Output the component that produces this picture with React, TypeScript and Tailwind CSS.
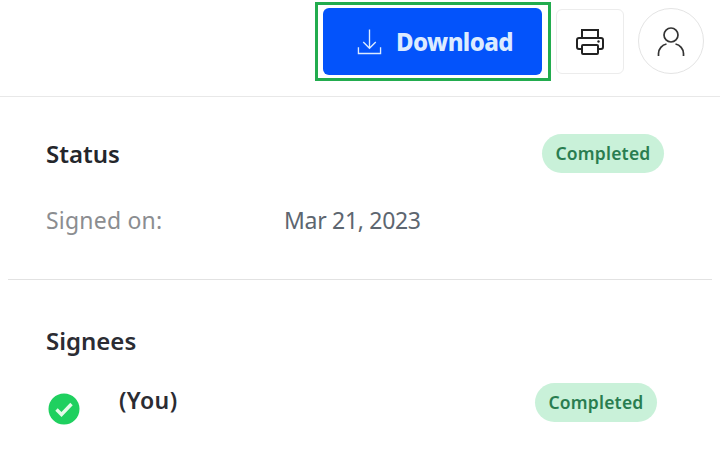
function Pill() {
  return (
    <span className="flex h-[39px] w-[122px] items-center justify-center rounded-full bg-[#c9f1d9] text-[17.5px] font-semibold tracking-[0.2px] text-[#2a7d50]">
      Completed
    </span>
  );
}

export default function App() {
  return (
    <div className="h-[454px] w-[720px] overflow-hidden bg-white font-['Noto_Sans',sans-serif]">
      {/* Header */}
      <header className="flex h-[97px] items-start justify-end border-b border-[#e8e8e8] pr-4 pt-[2px]">
        <div className="border-[3px] border-[#22ac4e] py-[3px] pl-[5px] pr-[6px]">
          <button className="flex h-[67px] w-[219px] items-center justify-center gap-[14px] rounded-md bg-[#0353fb] pl-[5px] text-[24px] font-extrabold tracking-[-0.6px] text-[#dcebff]">
            <svg viewBox="0 0 26 28" className="h-7 w-[25px]" fill="none" stroke="currentColor" strokeWidth="1.400">
              <path d="M13 1v19M6.500 14l6.500 6.500L19.500 14M1.500 19.500v6.500h23v-6.500" />
            </svg>
            Download
          </button>
        </div>
        <button className="ml-[5px] mt-[7px] flex h-[65px] w-[68px] items-center justify-center rounded-md border border-[#ececec]">
          <svg viewBox="0 0 28 28" className="h-7 w-7" fill="none" stroke="#222" strokeWidth="2">
            <path d="M6 10V2h16v8" />
            <path d="M6 21H3a2 2 0 0 1-2-2v-7a2 2 0 0 1 2-2h22a2 2 0 0 1 2 2v7a2 2 0 0 1-2 2h-3" />
            <rect x="6" y="17" width="16" height="9" rx="1" />
            <circle cx="22.500" cy="13.500" r="1.200" fill="#222" stroke="none" />
          </svg>
        </button>
        <button className="ml-[14px] mt-[6px] flex h-[66px] w-[66px] items-center justify-center rounded-full border border-[#e4e4e4]">
          <svg viewBox="0 0 28 31" className="h-[31px] w-7" fill="none" stroke="#333" strokeWidth="1.700">
            <circle cx="14" cy="9" r="7" />
            <path d="M1.500 30v-2.500a10 10 0 0 1 8-9.500M26.500 30v-2.500a10 10 0 0 0-8-9.500" />
          </svg>
        </button>
      </header>

      {/* Status */}
      <section className="mx-2 h-[183px] border-b border-[#e2e2e2] px-[38px] pt-[37px]">
        <div className="flex h-[39px] items-center justify-between pr-[10px]">
          <h2 className="text-[24px] font-semibold text-[#24262b]">Status</h2>
          <Pill />
        </div>
        <div className="mt-[30px] flex items-center text-[23px]">
          <span className="w-[238px] tracking-[0.2px] text-[#8b8d90]">Signed on:</span>
          <span className="tracking-[-0.3px] text-[#5d6670]">Mar 21, 2023</span>
        </div>
      </section>

      {/* Signees */}
      <section className="px-[46px] pt-[43px]">
        <h2 className="text-[24px] font-semibold leading-9 text-[#2b2c33]">Signees</h2>
        <div className="mt-[24px] flex items-start">
          <svg viewBox="0 0 32 32" className="ml-[2px] mt-[10px] h-8 w-8">
            <circle cx="16" cy="16" r="15.500" fill="#1fd05f" />
            <path d="M8.500 16.500l5 5 10-10.500" fill="none" stroke="#e6fbe9" strokeWidth="3.400" />
          </svg>
          <span className="ml-[39px] text-[23px] font-semibold leading-[34px] tracking-[0.4px] text-[#2b2c33]">(You)</span>
          <div className="ml-auto mr-[17px]">
            <Pill />
          </div>
        </div>
      </section>
    </div>
  );
}
